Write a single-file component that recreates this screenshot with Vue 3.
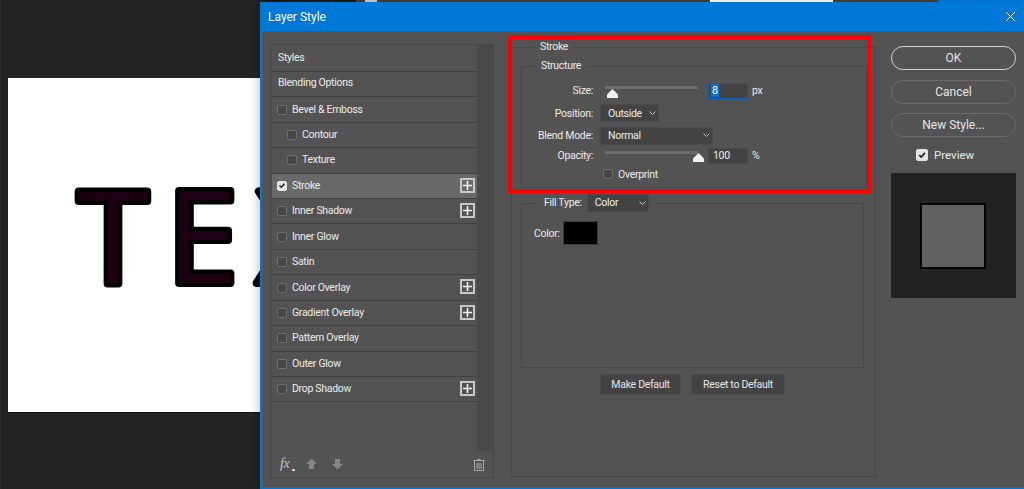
<script setup>
const effects = [
  { name: 'Styles', plain: true },
  { name: 'Blending Options', plain: true },
  { name: 'Bevel & Emboss' },
  { name: 'Contour', indent: true },
  { name: 'Texture', indent: true },
  { name: 'Stroke', checked: true, plus: true, active: true },
  { name: 'Inner Shadow', plus: true },
  { name: 'Inner Glow' },
  { name: 'Satin' },
  { name: 'Color Overlay', plus: true },
  { name: 'Gradient Overlay', plus: true },
  { name: 'Pattern Overlay' },
  { name: 'Outer Glow' },
  { name: 'Drop Shadow', plus: true }
]
</script>

<template>
  <div class="page">
    <div class="canvas">
      <div class="doc">
        <svg class="doc-text" width="252" height="334">
          <text x="69.5" y="205" font-size="129" letter-spacing="18">TEX</text>
        </svg>
      </div>
    </div>

    <div class="dialog-col">
      <div class="top-strip">
        <i class="s-dark"></i>
        <i class="s-brown-a"></i>
        <i class="s-light"></i>
        <i class="s-brown-b"></i>
        <i class="s-white"></i>
        <i class="s-brown-c"></i>
      </div>
      <div class="dialog">
        <div class="titlebar">
          <span>Layer Style</span>
          <svg class="close" width="11" height="11" viewBox="0 0 11 11">
            <path d="M1 1l9 9M10 1l-9 9" stroke="#fff" stroke-width="1" fill="none" />
          </svg>
        </div>

        <div class="body">
          <div class="left">
            <div class="list-wrap">
              <ul class="list">
                <li
                  v-for="e in effects"
                  :key="e.name"
                  class="item"
                  :class="{ active: e.active, indent: e.indent, plain: e.plain }"
                >
                  <span v-if="!e.plain" class="check" :class="{ on: e.checked }">
                    <svg v-if="e.checked" width="11" height="11" viewBox="0 0 11 11">
                      <path d="M2 5.5l2.5 2.5L9 3" stroke="#222" stroke-width="2" fill="none" />
                    </svg>
                  </span>
                  <span class="item-name">{{ e.name }}</span>
                  <span v-if="e.plus" class="plus">
                    <svg width="11" height="11" viewBox="0 0 11 11">
                      <path d="M5.5 1v9M1 5.5h9" stroke="#f2f2f2" stroke-width="1.6" fill="none" />
                    </svg>
                  </span>
                </li>
              </ul>
              <div class="track"></div>
            </div>
            <div class="left-foot">
              <span class="fx">fx<i class="fx-caret"></i></span>
              <svg class="arrow" width="13" height="12" viewBox="0 0 13 12">
                <path d="M6.5 0.5L12 6H9v5H4V6H1z" fill="#858585" />
              </svg>
              <svg class="arrow" width="13" height="12" viewBox="0 0 13 12">
                <path d="M6.5 11.5L12 6H9V1H4v5H1z" fill="#858585" />
              </svg>
              <svg class="trash" width="12" height="13" viewBox="0 0 12 13">
                <path d="M4.5 1.5h3M0.5 2.5h11M1.5 3v9.5h9V3M4 5v6M6 5v6M8 5v6" stroke="#a8a8a8" stroke-width="1" fill="none" />
              </svg>
            </div>
          </div>

          <div class="middle">
            <fieldset class="group outer">
              <legend>Stroke</legend>

              <fieldset class="group structure">
                <legend>Structure</legend>
                <div class="form">
                  <label>Size:</label>
                  <div class="control">
                    <div class="slider slider-size">
                      <svg class="thumb thumb-min" width="11" height="9" viewBox="0 0 11 9">
                        <path d="M5.5 0L10.5 5Q11 5.5 11 6.5V9H0V6.5Q0 5.5 0.5 5z" fill="#f2f2f2" />
                      </svg>
                    </div>
                    <span class="num focus"><b>8</b></span>
                    <span class="unit">px</span>
                  </div>

                  <label>Position:</label>
                  <div class="control">
                    <span class="select pos">Outside
                      <svg class="chev" width="7" height="5" viewBox="0 0 7 5"><path d="M0.5 0.5L3.5 3.5l3-3" stroke="#c8c8c8" fill="none" /></svg>
                    </span>
                  </div>

                  <label>Blend Mode:</label>
                  <div class="control">
                    <span class="select blend">Normal
                      <svg class="chev" width="7" height="5" viewBox="0 0 7 5"><path d="M0.5 0.5L3.5 3.5l3-3" stroke="#c8c8c8" fill="none" /></svg>
                    </span>
                  </div>

                  <label>Opacity:</label>
                  <div class="control">
                    <div class="slider slider-opacity">
                      <svg class="thumb thumb-max" width="11" height="9" viewBox="0 0 11 9">
                        <path d="M5.5 0L10.5 5Q11 5.5 11 6.5V9H0V6.5Q0 5.5 0.5 5z" fill="#f2f2f2" />
                      </svg>
                    </div>
                    <span class="num">100</span>
                    <span class="unit">%</span>
                  </div>

                  <span></span>
                  <div class="control overprint">
                    <span class="check"></span>
                    <span>Overprint</span>
                  </div>
                </div>
              </fieldset>

              <fieldset class="group fill">
                <legend class="fill-legend">
                  <span>Fill Type:</span>
                  <span class="select filltype">Color
                    <svg class="chev" width="7" height="5" viewBox="0 0 7 5"><path d="M0.5 0.5L3.5 3.5l3-3" stroke="#c8c8c8" fill="none" /></svg>
                  </span>
                </legend>
                <div class="color-row">
                  <span class="color-label">Color:</span>
                  <span class="swatch"></span>
                </div>
              </fieldset>

              <div class="defaults">
                <button class="flat make">Make Default</button>
                <button class="flat reset">Reset to Default</button>
              </div>
            </fieldset>
            <div class="red-box"></div>
          </div>

          <div class="right">
            <button class="pill primary">OK</button>
            <button class="pill cancel">Cancel</button>
            <button class="pill">New Style...</button>
            <div class="preview-check">
              <span class="check on big">
                <svg width="12" height="12" viewBox="0 0 12 12">
                  <path d="M2.5 6l2.5 2.5L9.5 3.5" stroke="#222" stroke-width="2" fill="none" />
                </svg>
              </span>
              <span>Preview</span>
            </div>
            <div class="preview">
              <div class="preview-swatch"></div>
            </div>
          </div>
        </div>
      </div>
    </div>
  </div>
</template>

<style>
html, body {
  margin: 0;
  background: #232323;
}
</style>

<style scoped>
.page {
  display: flex;
  width: 1024px;
  height: 489px;
  overflow: hidden;
  background: #232323;
  font-family: Roboto, "Open Sans", sans-serif;
  font-size: 10.5px;
  letter-spacing: -0.3px;
  color: #ebebeb;
}

.canvas {
  width: 260px;
  flex: none;
  box-sizing: border-box;
  padding: 78px 0 0 8px;
  overflow: hidden;
  box-shadow: inset 1px 0 0 #2e2e2e;
}

.doc {
  width: 252px;
  height: 334px;
  background: #fff;
  border-bottom: 1px solid #111;
}

.doc-text {
  display: block;
  font-family: "Open Sans", sans-serif;
  font-weight: 400;
  fill: #1c0012;
  stroke: #000;
  stroke-width: 8px;
  stroke-linejoin: round;
  paint-order: stroke;
}

.dialog-col {
  flex: 1;
  display: flex;
  flex-direction: column;
  position: relative;
}

.top-strip {
  height: 2px;
  display: flex;
  background: #0078d7;
}

.s-dark { width: 96px; background: #1c1a18; }
.s-brown-a { width: 9px; background: #4e3d2c; }
.s-light { width: 12px; background: #cfcfcf; }
.s-brown-b { width: 332px; background: #4e3d2c; }
.s-white { width: 125px; background: #fff; border: solid #e01010; border-width: 0 1px; box-sizing: border-box; }
.s-brown-c { width: 104px; background: #4e3d2c; }

.dialog {
  flex: 1;
  display: flex;
  flex-direction: column;
  background: #535353;
  border-left: 2px solid #0078d7;
  border-bottom: 2px solid #0078d7;
  box-shadow: -3px 0 8px rgba(0, 0, 0, 0.18);
}

.titlebar {
  height: 29px;
  flex: none;
  background: #0078d7;
  color: #fff;
  font-size: 12px;
  letter-spacing: 0;
  display: flex;
  align-items: center;
  justify-content: space-between;
  padding: 0 8px 0 6px;
}

.body {
  flex: 1;
  display: flex;
  padding: 13px 8px 9px 8px;
  gap: 17px;
}

.left {
  width: 224px;
  flex: none;
  box-sizing: border-box;
  border: 1px solid #484848;
  display: flex;
  flex-direction: column;
}

.list-wrap {
  flex: 1;
  display: flex;
}

.list {
  list-style: none;
  margin: 0;
  padding: 1.5px 0 0 1px;
  width: 206px;
  box-sizing: border-box;
}

.track {
  flex: 1;
  background: #4a4a4a;
}

.item {
  height: 24.43px;
  margin-bottom: 1px;
  box-shadow: 0 1px 0 #414141;
  display: flex;
  align-items: center;
  padding-left: 5px;
  gap: 5px;
  position: relative;
}

.item-name {
  padding-bottom: 1px;
}

.item.plain {
  padding-left: 6px;
}

.item.plain .item-name {
  padding-bottom: 3px;
}

.item.indent {
  padding-left: 15px;
}

.item.active {
  background: #696969;
}

.check {
  width: 10px;
  height: 10px;
  flex: none;
  box-sizing: border-box;
  border: 1px solid #6e6e6e;
  border-radius: 2px;
  background: #474747;
  display: inline-flex;
  align-items: center;
  justify-content: center;
}

.check.on {
  background: #e4e4e4;
  border-color: #e4e4e4;
}

.check.big {
  width: 12px;
  height: 12px;
}

.plus {
  position: absolute;
  right: 2px;
  top: 4px;
  width: 15px;
  height: 15px;
  box-sizing: border-box;
  border: 2px solid #c8c8c8;
  display: flex;
  align-items: center;
  justify-content: center;
}

.left-foot {
  height: 26px;
  flex: none;
  display: flex;
  align-items: center;
  padding: 0 8px 0 9px;
  box-sizing: border-box;
}

.fx {
  font-family: "Liberation Serif", serif;
  font-style: italic;
  font-size: 14px;
  color: #c4c4c4;
  width: 25px;
  position: relative;
}

.fx-caret {
  position: absolute;
  left: 12px;
  top: 13px;
  width: 3px;
  height: 2px;
  background: #d0d0d0;
}

.arrow {
  margin-right: 13px;
}

.trash {
  margin-left: auto;
}

.middle {
  width: 365px;
  flex: none;
  position: relative;
}

.group {
  margin: 0;
  min-width: 0;
  box-sizing: border-box;
  border: 1px solid #474747;
}

.group legend {
  line-height: 14px;
  padding: 0 6px;
}

.outer {
  height: 437px;
  margin-top: -4px;
  padding: 5px 9px 0;
}

.outer > legend {
  margin-left: 13px;
}

.structure {
  height: 129px;
  padding: 0;
  width: 346px;
}

.structure > legend {
  margin-left: 13px;
}

.form {
  display: grid;
  grid-template-columns: 71px 1fr;
  grid-template-rows: 19px 26px 19px 21px 16px;
  column-gap: 7px;
  padding-top: 8px;
}

.form label {
  text-align: right;
  align-self: center;
}

.control {
  display: flex;
  align-items: center;
}

.slider {
  width: 93px;
  height: 3px;
  margin: 0 10px 0 5px;
  background: #6c6c6c;
  position: relative;
  align-self: flex-start;
}

.slider-size {
  margin-top: 5px;
}

.slider-opacity {
  margin-top: 6px;
}

.thumb {
  position: absolute;
}

.thumb-min {
  left: 2px;
  top: 3px;
}

.thumb-max {
  right: -6px;
  top: 2px;
}

.num {
  width: 40px;
  height: 16px;
  box-sizing: border-box;
  background: #434343;
  border: 1px solid #4b4b4b;
  padding-left: 4px;
  line-height: 14px;
}

.num.focus {
  border-color: #0a5fb0;
  padding-left: 2px;
}

.num b {
  font-weight: 400;
  background: #1470d0;
  color: #fff;
  padding: 0 1px;
}

.unit {
  margin-left: 4px;
}

.select {
  height: 18px;
  box-sizing: border-box;
  background: #434343;
  border: 1px solid #4b4b4b;
  border-radius: 2px;
  display: inline-flex;
  align-items: center;
  justify-content: space-between;
  padding: 0 2px 0 7px;
}

.pos {
  width: 59px;
}

.blend {
  width: 113px;
}

.filltype {
  width: 62px;
}

.overprint {
  padding-left: 3px;
  gap: 5px;
}

.fill {
  height: 174px;
  width: 343px;
  margin-top: 6px;
  padding: 0;
}

.fill-legend {
  margin-left: 16px;
  display: flex;
  align-items: center;
  gap: 5px;
}

.color-row {
  display: flex;
  align-items: center;
  padding: 9px 0 0 12px;
}

.color-label {
  width: 29px;
}

.swatch {
  width: 35px;
  height: 24px;
  background: #000;
  box-sizing: border-box;
  border: 1px solid #3c3c3c;
}

.defaults {
  display: flex;
  gap: 10px;
  margin: 6px 0 0 79px;
}

.flat {
  height: 21px;
  box-sizing: border-box;
  background: #434343;
  border: 1px solid #4c4c4c;
  border-radius: 2px;
  color: #e6e6e6;
  font: inherit;
  letter-spacing: inherit;
  padding: 0;
}

.make {
  width: 81px;
}

.reset {
  width: 94px;
}

.red-box {
  position: absolute;
  left: -3px;
  top: -9px;
  width: 363px;
  height: 158px;
  box-sizing: border-box;
  border: 4px solid #fb0007;
}

.right {
  width: 125px;
  flex: none;
  display: flex;
  flex-direction: column;
  margin-left: -2px;
  padding-top: 2px;
}

.pill {
  height: 24px;
  box-sizing: border-box;
  margin-bottom: 10px;
  background: transparent;
  border: 1px solid #6b6b6b;
  border-radius: 12px;
  color: #e6e6e6;
  font: inherit;
  font-size: 12px;
  letter-spacing: 0;
  padding: 0;
}

.cancel {
  margin-bottom: 9px;
}

.primary {
  border: 1.5px solid #d2d2d2;
}

.preview-check {
  display: flex;
  align-items: center;
  gap: 6px;
  padding-left: 25px;
  font-size: 11.5px;
  letter-spacing: 0;
  height: 14px;
  margin: 1px 0 11px;
}

.preview {
  height: 125px;
  background: #222;
  display: flex;
  align-items: center;
  justify-content: center;
  padding-right: 1px;
  box-sizing: border-box;
}

.preview-swatch {
  width: 66px;
  height: 66px;
  box-sizing: border-box;
  border: 2px solid #000;
  background: #626262;
}
</style>
